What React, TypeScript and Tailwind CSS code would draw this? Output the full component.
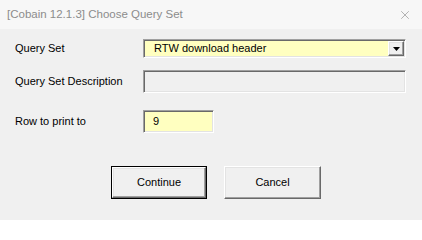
import { X } from 'lucide-react'

const sunken =
  'border border-t-[#a0a0a0] border-l-[#a0a0a0] border-b-white border-r-white shadow-[inset_1px_1px_0_#696969,inset_-1px_-1px_0_#e3e3e3]'

const raised =
  'border border-t-white border-l-white border-b-[#696969] border-r-[#696969] shadow-[inset_-1px_-1px_0_#a0a0a0,inset_1px_1px_0_#e3e3e3]'

function Label({ children }: { children: React.ReactNode }) {
  return <div className="w-[143px] shrink-0 pl-[15px] text-black whitespace-nowrap">{children}</div>
}

export default function App() {
  return (
    <div className="w-[422px] h-[220px] bg-[#f0f0f0] text-[11px] font-['Segoe_UI','Liberation_Sans',sans-serif] flex flex-col select-none">
      {/* title bar */}
      <div className="h-[29px] bg-[#f7f7f7] flex items-center justify-between pl-[7px] pr-[10px] text-[11.5px] text-[#8c8c8c]">
        <span>[Cobain 12.1.3] Choose Query Set</span>
        <X className="w-[14px] h-[14px] text-[#8c8c8c]" strokeWidth={1.1} />
      </div>

      <div className="flex flex-col pt-[10px]">
        {/* query set */}
        <div className="flex items-center h-[19px]">
          <Label>Query Set</Label>
          <div className={`w-[263px] h-[19px] flex items-stretch bg-[#ffffc0] ${sunken}`}>
            <div className="flex-1 flex items-center pl-[10px] text-black">RTW download header</div>
            <div className={`w-[16px] m-[1px] bg-[#f0f0f0] flex items-center justify-center ${raised}`}>
              <svg width="7" height="4" viewBox="0 0 7 4">
                <path d="M0 0h7L3.5 4z" fill="#000" />
              </svg>
            </div>
          </div>
        </div>

        {/* description */}
        <div className="flex items-center h-[23px] mt-[12px]">
          <Label>Query Set Description</Label>
          <div className={`w-[263px] h-[23px] bg-[#f0f0f0] ${sunken}`} />
        </div>

        {/* row */}
        <div className="flex items-center h-[23px] mt-[17px]">
          <Label>Row to print to</Label>
          <div className={`w-[71px] h-[23px] flex items-center pl-[9px] bg-[#ffffc0] ${sunken}`}>9</div>
        </div>

        {/* buttons */}
        <div className="flex gap-[17px] pl-[111px] mt-[33px]">
          <div className="w-[96px] h-[33px] border border-black">
            <div className={`w-full h-full flex items-center justify-center bg-[#f0f0f0] text-black ${raised}`}>
              Continue
            </div>
          </div>
          <div className={`w-[97px] h-[33px] flex items-center justify-center bg-[#f0f0f0] text-black ${raised}`}>
            Cancel
          </div>
        </div>
      </div>
    </div>
  )
}
